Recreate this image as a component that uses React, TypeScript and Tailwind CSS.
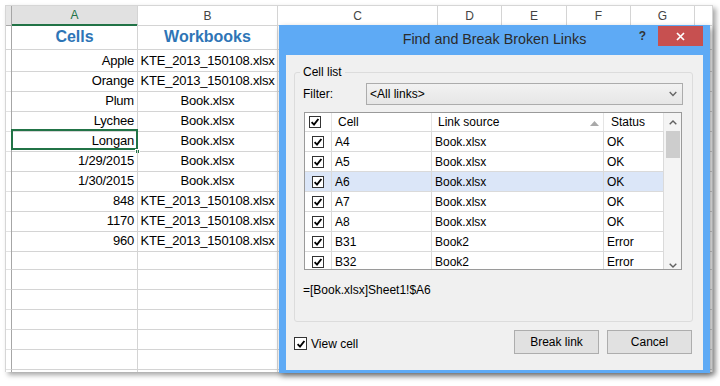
import React from "react";

const colLetters = ["", "A", "B", "C", "D", "E", "F", "G", ""];

const sheetRows: [string, string][] = [
  ["Apple", "KTE_2013_150108.xlsx"],
  ["Orange", "KTE_2013_150108.xlsx"],
  ["Plum", "Book.xlsx"],
  ["Lychee", "Book.xlsx"],
  ["Longan", "Book.xlsx"],
  ["1/29/2015", "Book.xlsx"],
  ["1/30/2015", "Book.xlsx"],
  ["848", "KTE_2013_150108.xlsx"],
  ["1170", "KTE_2013_150108.xlsx"],
  ["960", "KTE_2013_150108.xlsx"],
  ["", ""],
  ["", ""],
  ["", ""],
  ["", ""],
  ["", ""],
  ["", ""],
  ["", ""],
];

const links = [
  { cell: "A4", source: "Book.xlsx", status: "OK" },
  { cell: "A5", source: "Book.xlsx", status: "OK" },
  { cell: "A6", source: "Book.xlsx", status: "OK", selected: true },
  { cell: "A7", source: "Book.xlsx", status: "OK" },
  { cell: "A8", source: "Book.xlsx", status: "OK" },
  { cell: "B31", source: "Book2", status: "Error" },
  { cell: "B32", source: "Book2", status: "Error" },
];

const gridCols = "grid grid-cols-[6px_126px_140px_160px_64px_65px_64px_64px_18px]";

function Check({ size = 12 }: { size?: number }) {
  return (
    <span
      className="flex items-center justify-center border border-[#333] bg-white shrink-0"
      style={{ width: size, height: size }}
    >
      <svg width="10" height="10" viewBox="0 0 10 10">
        <path d="M1.6 5.2 L4 7.6 L8.4 2" stroke="#000" strokeWidth="1.9" fill="none" />
      </svg>
    </span>
  );
}

function Sheet() {
  return (
    <div className="ml-[5px] mt-[5px] w-[708px] h-[367px] overflow-hidden border-t border-l border-[#d6d6d6] bg-white shadow-[3px_3px_5px_rgba(0,0,0,0.35)]">
      {/* column headers */}
      <div className={`${gridCols} h-[19px] text-[12px] text-[#444]`}>
        {colLetters.map((c, i) => (
          <div
            key={i}
            className={
              i === 0
                ? "bg-[#e6e6e6] border-r border-b border-[#a6a6a6]"
                : i === 1
                ? "bg-[#e1e1e1] border-r border-[#d4d4d4] border-b-2 border-b-[#217346] text-[#217346] flex items-center justify-center"
                : "border-r border-b border-[#d4d4d4] flex items-center justify-center"
            }
          >
            {c}
          </div>
        ))}
      </div>

      {/* title row */}
      <div className={`${gridCols} h-[25px]`}>
        <div className="border-r border-b border-[#a6a6a6] border-b-[#d4d4d4]" />
        <div className="border-r border-b border-[#d4d4d4] flex items-center justify-center text-[16px] font-bold text-[#2e75b6]">
          Cells
        </div>
        <div className="border-r border-b border-[#d4d4d4] flex items-center justify-center text-[16px] font-bold text-[#2e75b6]">
          Workbooks
        </div>
        {[0, 1, 2, 3, 4, 5].map((k) => (
          <div key={k} className="border-r border-b border-[#d4d4d4]" />
        ))}
      </div>

      {sheetRows.map(([a, b], r) => (
        <div key={r} className={`${gridCols} h-[20px] text-[13px] tracking-[-0.2px] text-black`}>
          <div className="border-r border-b border-[#a6a6a6] border-b-[#e2e2e2]" />
          <div className="relative border-r border-b border-[#d4d4d4] flex items-center justify-end pr-[3px] pt-[1px]">
            {a}
            {a === "Longan" && (
              <>
                <div className="absolute -left-px -top-px w-[127px] h-[21px] border-2 border-[#217346]" />
                <div className="absolute -right-[3px] -bottom-[3px] w-[5px] h-[5px] bg-[#217346] border border-white" />
              </>
            )}
          </div>
          <div className="border-r border-b border-[#d4d4d4] flex items-center justify-center whitespace-nowrap pt-[1px]">
            {b}
          </div>
          {[0, 1, 2, 3, 4, 5].map((k) => (
            <div key={k} className="border-r border-b border-[#d4d4d4]" />
          ))}
        </div>
      ))}
    </div>
  );
}

function Dialog() {
  return (
    <div className="absolute left-[279px] top-[25px] w-[431px] h-[348px] bg-[#5eaaf5] flex flex-col px-[7px] pb-[3px] shadow-[2px_3px_6px_rgba(0,0,0,0.4)]">
      {/* title bar */}
      <div className="relative h-[30px] flex items-center justify-center text-[14.3px] text-[#2b2b2b]">
        Find and Break Broken Links
        <span className="absolute right-[57px] top-[4px] text-[12px] font-bold leading-[14px] text-[#333]">?</span>
        <div className="absolute right-0 top-[1px] w-[45px] h-[20px] bg-[#c75050] flex items-center justify-center">
          <svg width="9" height="9" viewBox="0 0 9 9">
            <path d="M1 1 L8 8 M8 1 L1 8" stroke="#fff" strokeWidth="1.7" />
          </svg>
        </div>
      </div>

      {/* body */}
      <div className="flex-1 bg-[#f0f0f0] flex flex-col text-[12px] text-black">
        <div className="relative mt-[17px] ml-[8px] mr-[10px] h-[250px] border border-[#dcdcdc] rounded-[3px] flex flex-col">
          <span className="absolute left-[5px] -top-[9px] px-[3px] bg-[#f0f0f0] leading-[16px]">Cell list</span>

          <div className="mt-[10px] h-[22px] flex items-center">
            <span className="w-[71px] pl-[8px]">Filter:</span>
            <div className="w-[317px] h-[22px] border border-[#acacac] bg-gradient-to-b from-[#f2f2f2] to-[#e6e6e6] flex items-center justify-between pl-[3px] pr-[5px]">
              <span>&lt;All links&gt;</span>
              <svg width="8" height="6" viewBox="0 0 8 6">
                <path d="M0.7 1 L4 4.4 L7.3 1" stroke="#666" strokeWidth="1.4" fill="none" />
              </svg>
            </div>
          </div>

          {/* list view */}
          <div className="mt-[7px] ml-[9px] w-[378px] h-[158px] border border-[#9a9a9a] bg-white flex overflow-hidden">
            <div className="w-[359px] flex flex-col">
              <div className="grid grid-cols-[27px_100px_172px_60px] h-[18px]">
                <div className="border-r border-[#e5e5e5] flex items-center pl-[4px]">
                  <Check />
                </div>
                <div className="border-r border-[#e5e5e5] flex items-center pl-[6px]">Cell</div>
                <div className="relative border-r border-[#e5e5e5] flex items-center pl-[6px]">
                  Link source
                  <svg className="absolute right-[4px] top-[8px]" width="9" height="5" viewBox="0 0 9 5">
                    <polygon points="0,5 4.5,0 9,5" fill="#a9a9a9" />
                  </svg>
                </div>
                <div className="border-r border-[#e5e5e5] flex items-center pl-[7px]">Status</div>
              </div>
              {links.map((l) => (
                <div
                  key={l.cell}
                  className={`grid grid-cols-[27px_100px_172px_60px] h-[20px] shrink-0 ${
                    l.selected ? "bg-[#dbe6f8]" : ""
                  }`}
                >
                  <div className="border-r border-t border-[#dadada] flex items-center pl-[7px]">
                    <Check />
                  </div>
                  <div className="border-r border-t border-[#dadada] flex items-center pl-[3px]">{l.cell}</div>
                  <div className="border-r border-t border-[#dadada] flex items-center pl-[3px]">{l.source}</div>
                  <div className="border-r border-t border-[#dadada] flex items-center pl-[3px]">{l.status}</div>
                </div>
              ))}
            </div>
            {/* scrollbar */}
            <div className="w-[17px] bg-[#f4f4f4] flex flex-col">
              <div className="h-[18px] flex items-center justify-center">
                <svg width="8" height="5" viewBox="0 0 8 5">
                  <path d="M0.7 4.2 L4 1 L7.3 4.2" stroke="#606060" strokeWidth="1.4" fill="none" />
                </svg>
              </div>
              <div className="h-[27px] ml-[2px] mr-[1px] bg-[#cdcdcd]" />
              <div className="flex-1 flex items-end justify-center pb-[1px]">
                <svg width="8" height="5" viewBox="0 0 8 5">
                  <path d="M0.7 0.8 L4 4 L7.3 0.8" stroke="#606060" strokeWidth="1.4" fill="none" />
                </svg>
              </div>
            </div>
          </div>

          <div className="mt-[12px] pl-[8px] leading-[16px]">=[Book.xlsx]Sheet1!$A6</div>
        </div>

        {/* footer */}
        <div className="mt-[8px] h-[24px] flex items-center pl-[8px] pr-[11px]">
          <div className="mt-[3px] flex items-center gap-[4px]">
            <Check size={13} />
            <span>View cell</span>
          </div>
          <div className="ml-auto flex gap-[8px]">
            <div className="w-[85px] h-[24px] border border-[#adadad] bg-[#e1e1e1] flex items-center justify-center">
              Break link
            </div>
            <div className="w-[85px] h-[24px] border border-[#adadad] bg-[#e1e1e1] flex items-center justify-center">
              Cancel
            </div>
          </div>
        </div>
      </div>
    </div>
  );
}

export default function App() {
  return (
    <div className="relative w-[720px] h-[386px] overflow-hidden bg-white font-['Liberation_Sans',Arial,sans-serif]">
      <Sheet />
      <Dialog />
    </div>
  );
}
